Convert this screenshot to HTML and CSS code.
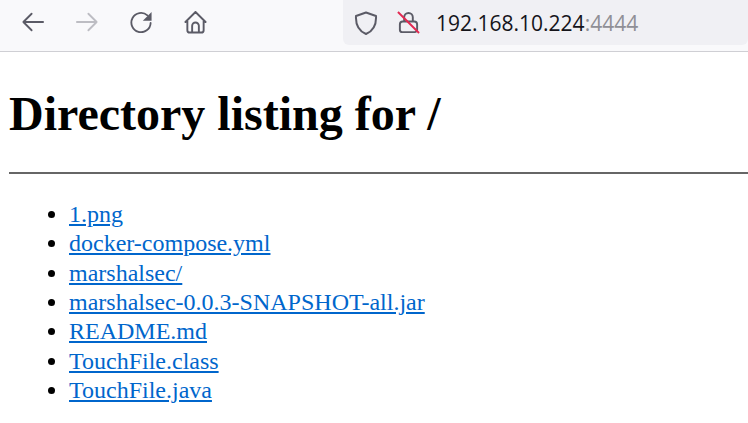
FILE: index.html
```html
<!DOCTYPE html>
<html lang="en">
<head>
<meta charset="utf-8">
<title>Directory listing for /</title>
<link rel="stylesheet" href="styles.css">
</head>
<body>
<header class="toolbar">
  <nav class="nav-buttons">
    <svg class="icon" viewBox="0 0 24 24"><path class="s-dark" d="M23 12H1.500M10.500 3 1.500 12 10.500 21"/></svg>
    <svg class="icon" viewBox="0 0 24 24"><path class="s-faint" d="M1 12H22.500M13.500 3 22.500 12 13.500 21"/></svg>
    <svg class="icon" viewBox="0 0 24 24"><path class="s-dark" d="M22.500 13a10.500 10.500 0 1 1-3.500-8.200"/><path class="f-dark" d="M23.500 1v9.500h-9.500z"/></svg>
    <svg class="icon icon-home" viewBox="0 0 24 24"><path class="s-dark" d="M1.500 11.500 12 1l10.500 10.500M3.500 9.500v10.500a2.500 2.500 0 0 0 2.500 2.500h12a2.500 2.500 0 0 0 2.500-2.500V9.500M8.500 22.500V15.500a3.500 3.500 0 0 1 7 0v7"/></svg>
  </nav>
  <div class="urlbar">
    <svg class="icon-shield" viewBox="0 0 24 24"><path class="s-dark" d="M12 1.500 22 5c.5 9-3 15-10 18C5 20 1.500 14 2 5z"/></svg>
    <svg class="icon-lock" viewBox="0 0 24 24"><path class="s-dark" d="M7.500 11V6.500a4.500 4.500 0 0 1 9 0V11M6 11h12a3 3 0 0 1 3 3v5.500a2.500 2.500 0 0 1-2.500 2.500h-13A2.500 2.500 0 0 1 3 19.500V14a3 3 0 0 1 3-3z"/><path class="s-red" d="M1 1l22 22"/></svg>
    <span class="url">192.168.10.224<span class="port">:4444</span></span>
  </div>
</header>
<main class="page">
  <h1>Directory listing for /</h1>
  <hr>
  <ul>
    <li><a href="#">1.png</a></li>
    <li><a href="#">docker-compose.yml</a></li>
    <li><a href="#">marshalsec/</a></li>
    <li><a href="#">marshalsec-0.0.3-SNAPSHOT-all.jar</a></li>
    <li><a href="#">README.md</a></li>
    <li><a href="#">TouchFile.class</a></li>
    <li><a href="#">TouchFile.java</a></li>
  </ul>
</main>
</body>
</html>
```
FILE: styles.css
```css
html, body { margin: 0; padding: 0; overflow: hidden; }
body { width: 748px; height: 423px; background: #fff; font-family: "Liberation Serif", serif; color: #000; }
.toolbar { display: flex; height: 51px; background: #f9f9fb; border-bottom: 1px solid #cfcfd4; }
.nav-buttons { display: flex; align-items: center; gap: 32px; padding: 0 0 7px 22px; width: 321px; box-sizing: border-box; }
.icon { width: 22px; height: 22px; fill: none; flex: none; }
.icon-home { width: 23px; height: 23px; }
.urlbar { display: flex; align-items: center; width: 405px; height: 45px; background: #f0f0f4; border-radius: 0 0 6px 6px; margin-left: 22px; padding-left: 11px; box-sizing: border-box; flex: none; }
.icon-shield { width: 24px; height: 24px; fill: none; flex: none; }
.icon-lock { width: 23px; height: 23px; fill: none; flex: none; margin-left: 19px; }
.s-dark { fill: none; stroke: #5b5b66; stroke-width: 2; stroke-linecap: round; stroke-linejoin: round; }
.s-faint { fill: none; stroke: #bdbdc3; stroke-width: 2; stroke-linecap: round; stroke-linejoin: round; }
.f-dark { fill: #5b5b66; }
.s-red { stroke: #e22850; stroke-width: 2; }
.url { font: 21px "Open Sans", "Liberation Sans", sans-serif; color: #15141a; margin-left: 16px; white-space: nowrap; }
.port { color: #8f8f96; }
.page { padding: 0 0 0 9px; }
h1 { font-size: 48px; line-height: 52px; font-weight: bold; margin: 36px 0 32px; }
hr { margin: 0 0 26px; border: 0; border-top: 2px solid #666; height: 0; }
ul { margin: 0; padding: 0 0 0 60px; font-size: 24px; line-height: 29.340px; }
a { color: #0066cc; }
```
